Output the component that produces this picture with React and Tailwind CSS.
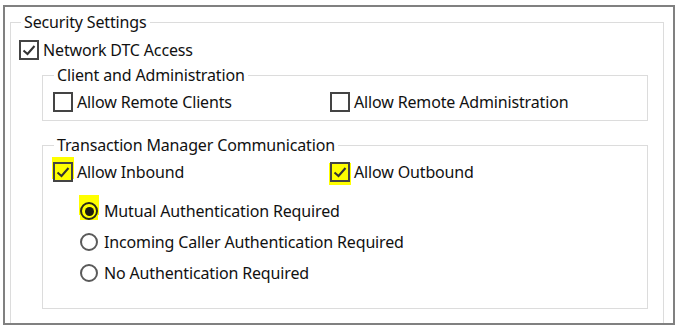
import { useState } from "react";

const Check = () => (
  <svg width="16" height="16" viewBox="0 0 16 16" fill="none">
    <path d="M2.5 8.5 L6.5 12 L13.5 4" stroke="#333" strokeWidth="2" />
  </svg>
);

const CheckBox = ({ checked, label, hl = "" }) => (
  <div className="flex items-center h-[20px]">
    <span
      className={`flex items-center justify-center w-[20px] h-[20px] border-2 border-[#444] ${
        hl ? "bg-[#ffff00] " + hl : "bg-white"
      }`}
    >
      {checked && <Check />}
    </span>
    <span className="ml-[4px] leading-[20px]">{label}</span>
  </div>
);

const Radio = ({ checked, label, hl = false }) => (
  <div className="flex items-center h-[20px]">
    <span className={`flex ml-[1px] ${hl ? "bg-[#ffff00] shadow-[0_-6px_0_1px_#ffff00]" : ""}`}>
      <span
        className={`flex items-center justify-center w-[18px] h-[18px] rounded-full border-2 ${
          checked ? "border-[#2a2a1a]" : "border-[#5a5a5a] bg-white"
        }`}
      >
        {checked && <span className="w-[9px] h-[9px] rounded-full bg-[#1c1c10]" />}
      </span>
    </span>
    <span className="ml-[6px] leading-[20px]">{label}</span>
  </div>
);

const GroupBox = ({ title, className = "", children }) => (
  <fieldset className={`border border-[#dcdcdc] ${className}`}>
    <legend className="ml-[11px] px-[3px] leading-[20px]">{title}</legend>
    {children}
  </fieldset>
);

export default function App() {
  const [auth] = useState("mutual");

  return (
    <div
      className="w-[680px] h-[331px] bg-white text-[16px] tracking-[-0.15px] text-[#111] pt-[5px] pl-[3px]"
      style={{ fontFamily: '"Noto Sans", "Open Sans", sans-serif' }}
    >
      <div className="w-[672px] h-[320px] border-2 border-[#808080] overflow-hidden">
        <GroupBox title="Security Settings" className="ml-[5px] mt-[5px] w-[654px] pb-[40px] [&>legend]:ml-[10px]">
          <div className="mt-[8px] ml-[8px]">
            <CheckBox checked label="Network DTC Access" />
          </div>

          <GroupBox title="Client and Administration" className="ml-[31px] mt-[5px] w-[606px] pb-[8px]">
            <div className="flex mt-[7px] ml-[10px]">
              <div className="w-[277px]">
                <CheckBox label="Allow Remote Clients" />
              </div>
              <CheckBox label="Allow Remote Administration" />
            </div>
          </GroupBox>

          <GroupBox title="Transaction Manager Communication" className="ml-[31px] mt-[14px] w-[606px] pb-[25px]">
            <div className="flex mt-[7px] ml-[10px]">
              <div className="w-[277px]">
                <CheckBox checked label="Allow Inbound" hl="shadow-[0_-4px_0_1px_#ffff00]" />
              </div>
              <CheckBox checked label="Allow Outbound" hl="shadow-[0_2px_0_1px_#ffff00]" />
            </div>
            <div className="flex flex-col gap-[11px] mt-[19px] ml-[36px]">
              <Radio checked={auth === "mutual"} hl label="Mutual Authentication Required" />
              <Radio checked={auth === "caller"} label="Incoming Caller Authentication Required" />
              <Radio checked={auth === "none"} label="No Authentication Required" />
            </div>
          </GroupBox>
        </GroupBox>
      </div>
    </div>
  );
}
